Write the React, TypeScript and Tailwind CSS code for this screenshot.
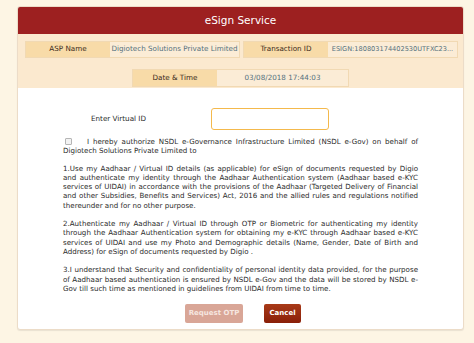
import React from "react";

const font = { fontFamily: '"DejaVu Sans", Verdana, sans-serif' };

function InfoCell({
  label,
  value,
  className,
  valueSize = "text-[7.2px]",
}: {
  label: string;
  value: string;
  className?: string;
  valueSize?: string;
}) {
  return (
    <div className={"flex h-[17px] border border-[#f1d9b3] " + (className ?? "")}>
      <div className="flex w-[84px] shrink-0 items-center justify-center bg-[#f8dba8] text-[7.2px] text-[#3a2a1a]">
        {label}
      </div>
      <div
        className={
          "flex min-w-0 flex-1 items-center justify-center whitespace-nowrap bg-[#fbecd6] text-[#55727e] " + valueSize
        }
      >
        {value}
      </div>
    </div>
  );
}

// each line is laid out on its own so the breaks match the screenshot
function Para({ lines, className, indent }: { lines: string[]; className?: string; indent?: boolean }) {
  return (
    <div className={className}>
      {lines.map((l, i) => (
        <div
          key={i}
          className={
            (i < lines.length - 1 ? "text-justify [text-align-last:justify] " : "") +
            (indent && i === 0 ? "pl-[24px]" : "")
          }
        >
          {l}
        </div>
      ))}
    </div>
  );
}

export default function App() {
  return (
    <div className="h-[343px] w-[474px] bg-[#fdf5e4] pt-[6px]" style={font}>
      <div className="mx-[17px] w-[447px] overflow-hidden rounded-[3px] border border-[#ecdcc8] bg-white shadow-[0_1px_1px_rgba(0,0,0,0.08)]">
        <div className="flex h-[27px] items-center justify-center bg-[#9d2020] text-[10.5px] text-white">
          eSign Service
        </div>
        <div className="bg-[#fbe9cf] pb-[1px] pl-[7px] pr-[5px] pt-[7px]">
          <div className="flex gap-[3px]">
            <InfoCell className="w-[216px]" label="ASP Name" value="Digiotech Solutions Private Limited" />
            <InfoCell
              className="w-[216px]"
              label="Transaction ID"
              value="ESIGN:180803174402530UTFXC23..."
              valueSize="text-[6.6px]"
            />
          </div>
          <div className="mt-[11px] flex justify-center pr-[2px]">
            <InfoCell className="h-[18px] w-[217px]" label="Date & Time" value="03/08/2018 17:44:03" />
          </div>
        </div>
        <div className="px-[45px] pb-[6px] pt-[20px] text-[7.1px] leading-[9.3px] text-[#2a2a2a]">
          <div className="flex items-center">
            <div className="w-[148px] pl-[28px] text-[7.2px]">Enter Virtual ID</div>
            <div className="h-[22px] w-[118px] rounded-[3px] border-[1.5px] border-[#f4b94c] bg-white" />
          </div>
          <div className="relative mt-[7px]">
            <span className="absolute left-[2px] top-[1px] h-[7px] w-[7px] rounded-[1px] border border-[#b5b5b5] bg-[#f3f3f3]" />
            <Para
              indent
              lines={[
                "I hereby authorize NSDL e-Governance Infrastructure Limited (NSDL e-Gov) on behalf of",
                "Digiotech Solutions Private Limited to",
              ]}
            />
          </div>
          <Para
            className="mt-[8px]"
            lines={[
              "1.Use my Aadhaar / Virtual ID details (as applicable) for eSign of documents requested by Digio",
              "and authenticate my identity through the Aadhaar Authentication system (Aadhaar based e-KYC",
              "services of UIDAI) in accordance with the provisions of the Aadhaar (Targeted Delivery of Financial",
              "and other Subsidies, Benefits and Services) Act, 2016 and the allied rules and regulations notified",
              "thereunder and for no other purpose.",
            ]}
          />
          <Para
            className="mt-[9px]"
            lines={[
              "2.Authenticate my Aadhaar / Virtual ID through OTP or Biometric for authenticating my identity",
              "through the Aadhaar Authentication system for obtaining my e-KYC through Aadhaar based e-KYC",
              "services of UIDAI and use my Photo and Demographic details (Name, Gender, Date of Birth and",
              "Address) for eSign of documents requested by Digio .",
            ]}
          />
          <Para
            className="mt-[9px]"
            lines={[
              "3.I understand that Security and confidentiality of personal identity data provided, for the purpose",
              "of Aadhaar based authentication is ensured by NSDL e-Gov and the data will be stored by NSDL e-",
              "Gov till such time as mentioned in guidelines from UIDAI from time to time.",
            ]}
          />
          <div className="mt-[11px] flex justify-center gap-[21px] pl-[5px]">
            <button className="h-[19px] w-[58px] rounded-[2px] bg-[#d9a697] text-[7px] font-bold text-[#f6e6e0]">
              Request OTP
            </button>
            <button className="h-[19px] w-[37px] rounded-[2px] bg-gradient-to-b from-[#a83a18] to-[#8a1f08] text-[7px] font-bold text-white">
              Cancel
            </button>
          </div>
        </div>
      </div>
    </div>
  );
}
